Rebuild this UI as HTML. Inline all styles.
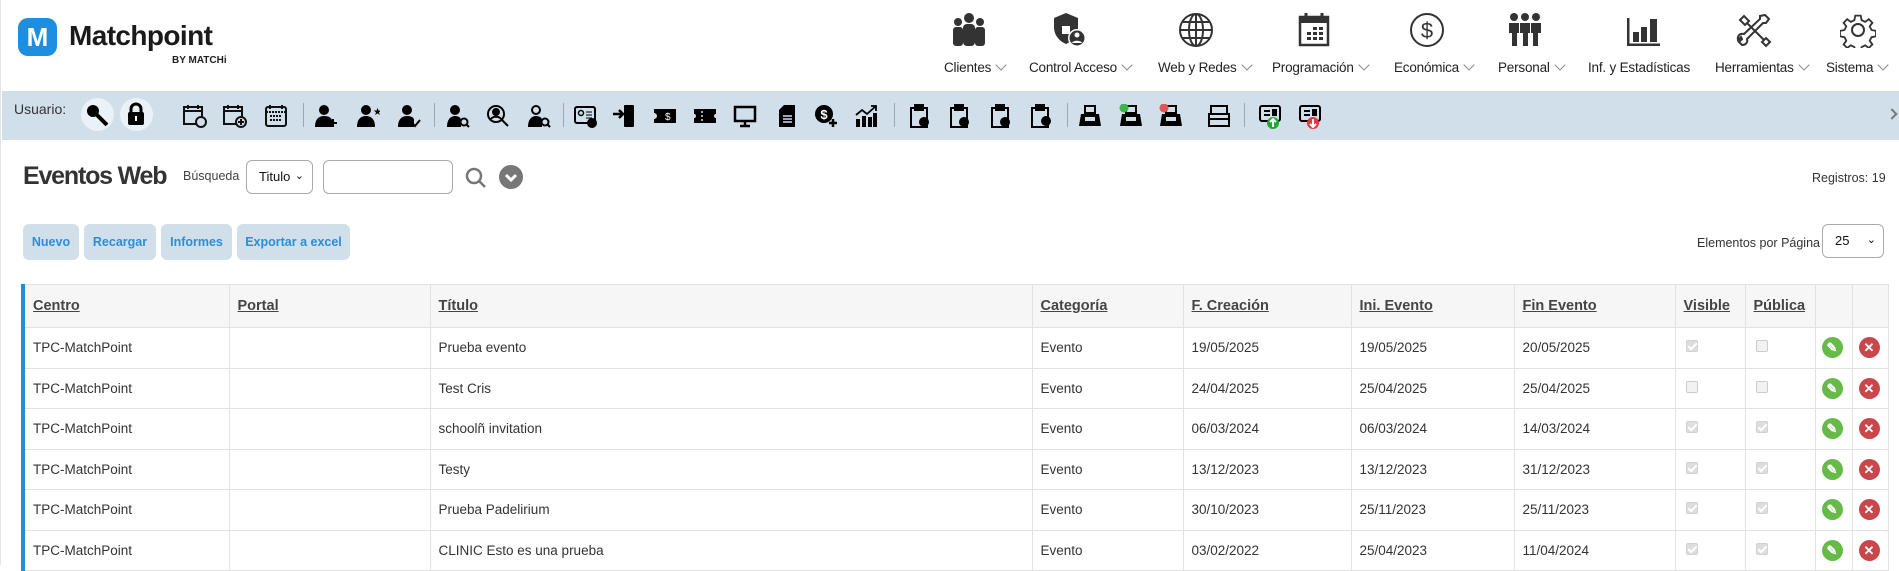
<!DOCTYPE html>
<html><head><meta charset="utf-8">
<style>
*{box-sizing:border-box;margin:0;padding:0}
body{width:1899px;height:565px;overflow:hidden;background:#fff;font-family:"Liberation Sans",sans-serif;color:#333;position:relative}
.a{position:absolute}
.nav{position:absolute;top:60px;font-size:13.5px;color:#222;white-space:nowrap;letter-spacing:-0.2px}
.nav .cv{display:inline-block;width:8px;height:8px;border-right:1.3px solid #888;border-bottom:1.3px solid #888;transform:rotate(45deg);margin-left:6px;position:relative;top:-3px}
.bar{position:absolute;left:2px;top:91px;width:1897px;height:49px;background:#d0dfe9}
.ti{position:absolute;top:104px}
.sep{position:absolute;top:103px;width:1px;height:24px;background:#9aa}
.btn{position:absolute;top:224px;height:36px;background:#d0dfe9;border-radius:6px;color:#2b8ed6;font-weight:bold;font-size:12.5px;line-height:36px;text-align:center}
table{position:absolute;left:21px;top:284px;border-collapse:collapse;font-size:13.5px;color:#333;border-left:4px solid #1e8fe0}
td,th{border:1px solid #e2e2e2;padding:0 0 0 8px;text-align:left;height:40.5px;white-space:nowrap}
th{background:#f6f6f6;height:43px;font-weight:bold;color:#444;font-size:14.5px;text-decoration:underline}
.cb{display:inline-block;width:12px;height:12px;border:1px solid #ccc;border-radius:2px;background:#f2f2f2;margin-left:2px}
.cb.k{background:#ddd;border-color:#d2d2d2;position:relative}
.cb.k:after{content:"";position:absolute;left:3px;top:0px;width:3px;height:7px;border-right:2px solid #fff;border-bottom:2px solid #fff;transform:rotate(45deg)}
.ed,.dl{display:inline-block;width:21px;height:21px;border-radius:50%;color:#fff;font-size:13px;text-align:center;line-height:21px;font-weight:bold}
.ed{background:#66bb48}.dl{background:#c9474a}
</style></head><body>
<div class="a" style="left:0;top:0;width:1px;height:565px;background:#e5e5e5"></div>
<!-- logo -->
<div class="a" style="left:18px;top:18px;width:39px;height:38px;border-radius:10px;background:#1e8fe0;color:#fff;font-weight:bold;font-size:26px;line-height:38px;text-align:center">M</div>
<div class="a" style="left:69px;top:20px;font-size:28px;font-weight:bold;color:#1a1a1a;letter-spacing:-0.6px">Matchpoint</div>
<div class="a" style="left:172px;top:55px;font-size:10px;font-weight:bold;color:#222">BY MATCHi</div>

<!-- nav icons -->
<svg class="a" style="left:950px;top:12px" width="38" height="36" viewBox="0 0 38 36" fill="#333"><circle cx="19" cy="6" r="5"/><circle cx="8" cy="10" r="4"/><circle cx="30" cy="10" r="4"/><rect x="13" y="12" width="12" height="22" rx="4"/><rect x="3" y="15" width="10" height="19" rx="3"/><rect x="25" y="15" width="10" height="19" rx="3"/></svg>
<svg class="a" style="left:1052px;top:11px" width="36" height="38" viewBox="0 0 36 38" fill="#333"><path d="M14 2l12 5v9c0 8-5 14-12 17C7 30 2 24 2 16V7z"/><circle cx="25" cy="27" r="9" fill="#fff"/><circle cx="25" cy="27" r="7.5"/><circle cx="25" cy="24" r="2.5" fill="#fff"/><path d="M20 32c1-3 9-3 10 0z" fill="#fff"/><rect x="10" y="15" width="8" height="8" fill="#fff"/></svg>
<svg class="a" style="left:1178px;top:12px" width="36" height="36" viewBox="0 0 36 36" fill="none" stroke="#333" stroke-width="2"><circle cx="18" cy="18" r="16"/><ellipse cx="18" cy="18" rx="7" ry="16"/><path d="M2 18h32M18 2v32M5 10h26M5 26h26"/></svg>
<svg class="a" style="left:1297px;top:11px" width="34" height="36" viewBox="0 0 34 36"><rect x="3" y="6" width="28" height="28" fill="none" stroke="#333" stroke-width="2.5"/><rect x="3" y="6" width="28" height="6" fill="#333"/><path d="M9 2v8M25 2v8" stroke="#333" stroke-width="3"/><g fill="#333"><rect x="16" y="16" width="4" height="3"/><rect x="22" y="16" width="4" height="3"/><rect x="10" y="21" width="4" height="3"/><rect x="16" y="21" width="4" height="3"/><rect x="22" y="21" width="4" height="3"/><rect x="10" y="26" width="4" height="3"/><rect x="16" y="26" width="4" height="3"/><rect x="22" y="26" width="4" height="3"/></g></svg>
<svg class="a" style="left:1409px;top:12px" width="36" height="36" viewBox="0 0 36 36"><circle cx="18" cy="18" r="16" fill="none" stroke="#333" stroke-width="2"/><text x="18" y="26" font-size="22" text-anchor="middle" fill="#333" font-family="Liberation Sans">$</text></svg>
<svg class="a" style="left:1508px;top:12px" width="34" height="36" viewBox="0 0 34 36" fill="#333"><circle cx="6" cy="5" r="4"/><circle cx="17" cy="5" r="4"/><circle cx="28" cy="5" r="4"/><path d="M1 11h10v10h-2v13H4V21H1zM12 11h10v10h-2v13h-5V21h-3zM23 11h10v10h-3v13h-5V21h-2z"/></svg>
<svg class="a" style="left:1625px;top:14px" width="36" height="34" viewBox="0 0 36 34" fill="#333"><rect x="2" y="4" width="2.5" height="28"/><rect x="2" y="29.5" width="33" height="2.5"/><rect x="8" y="18" width="6" height="10"/><rect x="16" y="13" width="6" height="15"/><rect x="25" y="5" width="7" height="23"/></svg>
<svg class="a" style="left:1736px;top:12px" width="36" height="36" viewBox="0 0 36 36" fill="none" stroke="#333" stroke-width="2"><path d="M4 8l4-4 5 5-2 2 17 17 2-2 4 4-4 4-4-4 2-2L11 11l-2 2z"/><path d="M29 3l4 4-3 4-3 0-16 16c1 3-1 6-5 6l-3-3 3-3-1-2-3 3c-1-4 2-7 6-6L24 7l0-3z"/></svg>
<svg class="a" style="left:1840px;top:12px" width="36" height="36" viewBox="0 0 36 36" fill="none" stroke="#333" stroke-width="2"><path d="M15 2h6l1 5 4 2 4-3 4 4-3 4 2 4 5 1v6l-5 1-2 4 3 4-4 4-4-3-4 2-1 5h-6l-1-5-4-2-4 3-4-4 3-4-2-4-5-1v-6l5-1 2-4-3-4 4-4 4 3 4-2z" transform="scale(0.9) translate(2 2)"/><circle cx="18" cy="18" r="6"/></svg>

<div class="nav" style="left:944px">Clientes<span class="cv"></span></div>
<div class="nav" style="left:1029px">Control Acceso<span class="cv"></span></div>
<div class="nav" style="left:1158px">Web y Redes<span class="cv"></span></div>
<div class="nav" style="left:1272px">Programación<span class="cv"></span></div>
<div class="nav" style="left:1394px">Económica<span class="cv"></span></div>
<div class="nav" style="left:1498px">Personal<span class="cv"></span></div>
<div class="nav" style="left:1588px">Inf. y Estadísticas</div>
<div class="nav" style="left:1715px">Herramientas<span class="cv"></span></div>
<div class="nav" style="left:1826px">Sistema<span class="cv"></span></div>

<!-- toolbar -->
<div class="bar"></div>
<div class="a" style="left:14px;top:101px;font-size:14px;color:#333">Usuario:</div>
<div class="a" style="left:81px;top:98px;width:33px;height:33px;border-radius:50%;background:#eaf2f7"></div>
<div class="a" style="left:120px;top:98px;width:33px;height:33px;border-radius:50%;background:#eaf2f7"></div>
<svg class="a" style="left:86px;top:104px" width="24" height="24" viewBox="0 0 24 24"><circle cx="7" cy="7" r="6" fill="#000"/><path d="M10 10l11 11" stroke="#000" stroke-width="4"/></svg>
<svg class="a" style="left:126px;top:102px" width="20" height="24" viewBox="0 0 20 24"><path d="M5 11V7a5 5 0 0110 0v4" stroke="#000" stroke-width="3" fill="none"/><rect x="2" y="10" width="16" height="13" rx="2"/><rect x="9" y="14" width="2" height="5" fill="#fff"/></svg>
<svg class="ti" style="left:183px" width="24" height="24" viewBox="0 0 24 24" fill="none" stroke="#111" stroke-width="2"><rect x="1" y="3" width="18" height="17"/><path d="M1 7h18M5 1v4M15 1v4"/><circle cx="18" cy="18" r="5" fill="#d0dfe9"/></svg>
<svg class="ti" style="left:223px" width="24" height="24" viewBox="0 0 24 24" fill="none" stroke="#111" stroke-width="2"><rect x="1" y="3" width="18" height="17"/><path d="M1 7h18M5 1v4M15 1v4"/><circle cx="18" cy="18" r="5" fill="#d0dfe9"/><path d="M18 15v6M15 18h6"/></svg>
<svg class="ti" style="left:264px" width="24" height="24" viewBox="0 0 24 24" fill="none" stroke="#111" stroke-width="2"><rect x="2" y="3" width="20" height="19" rx="2"/><path d="M2 8h20M6 1v4M18 1v4M6 12h12M6 16h12" stroke-dasharray="2 1"/></svg>
<div class="sep" style="left:303px"></div>
<svg class="ti" style="left:314px" width="24" height="24" viewBox="0 0 24 24" fill="#000"><circle cx="10" cy="6" r="5"/><path d="M1 23c0-8 4-11 9-11s8 2 8 5v6z"/><path d="M19 15v8M15 19h8" stroke="#000" stroke-width="2"/></svg>
<svg class="ti" style="left:356px" width="24" height="24" viewBox="0 0 24 24" fill="#000"><circle cx="10" cy="6" r="5"/><path d="M1 23c0-8 4-11 9-11s9 3 9 11z"/><text x="17" y="11" font-size="10">★</text></svg>
<svg class="ti" style="left:397px" width="24" height="24" viewBox="0 0 24 24" fill="#000"><circle cx="10" cy="6" r="5"/><path d="M1 23c0-8 4-11 9-11s7 2 7 4v7z"/><path d="M15 19l3 3 5-6" stroke="#000" stroke-width="2" fill="none"/></svg>
<div class="sep" style="left:434px"></div>
<svg class="ti" style="left:446px" width="24" height="24" viewBox="0 0 24 24" fill="#000"><circle cx="9" cy="6" r="5"/><path d="M1 23c0-8 4-11 8-11s6 2 6 4v7z"/><circle cx="18" cy="18" r="3.5" fill="none" stroke="#000" stroke-width="2"/><path d="M20 20l3 3" stroke="#000" stroke-width="2"/></svg>
<svg class="ti" style="left:486px" width="24" height="24" viewBox="0 0 24 24" fill="none" stroke="#000" stroke-width="2"><circle cx="10" cy="10" r="8"/><circle cx="10" cy="8" r="3" fill="#000"/><path d="M5 15c2-3 8-3 10 0M16 16l6 6" /></svg>
<svg class="ti" style="left:527px" width="24" height="24" viewBox="0 0 24 24" fill="#000"><circle cx="9" cy="6" r="4" fill="none" stroke="#000" stroke-width="2"/><path d="M1 23c0-8 4-11 8-11s6 2 6 4v7z"/><circle cx="18" cy="18" r="3.5" fill="none" stroke="#000" stroke-width="2"/><path d="M20 20l3 3" stroke="#000" stroke-width="2"/></svg>
<div class="sep" style="left:563px"></div>
<svg class="ti" style="left:574px" width="24" height="24" viewBox="0 0 24 24"><rect x="1" y="3" width="20" height="16" rx="2" fill="none" stroke="#000" stroke-width="2"/><circle cx="7" cy="9" r="2.5" fill="none" stroke="#000" stroke-width="1.5"/><path d="M12 8h6M12 11h6M12 14h6" stroke="#000"/><circle cx="18" cy="19" r="5"/></svg>
<svg class="ti" style="left:612px" width="24" height="24" viewBox="0 0 24 24" fill="#000"><rect x="12" y="1" width="10" height="22" rx="1"/><path d="M1 10h9M7 6l4 4-4 4" stroke="#000" stroke-width="2.5" fill="none"/></svg>
<svg class="ti" style="left:653px" width="24" height="24" viewBox="0 0 24 24"><path d="M1 5h22v14H1v-4a3 3 0 000-6z"/><text x="12" y="16" font-size="10" fill="#fff" font-family="Liberation Sans">$</text></svg>
<svg class="ti" style="left:693px" width="24" height="24" viewBox="0 0 24 24"><path d="M1 5h22v5a2 2 0 000 4v5H1v-5a2 2 0 000-4z"/><path d="M9 7v10" stroke="#d0dfe9" stroke-width="1.5" stroke-dasharray="2 2"/></svg>
<svg class="ti" style="left:733px" width="24" height="24" viewBox="0 0 24 24" fill="none" stroke="#000" stroke-width="2.5"><rect x="2" y="3" width="20" height="14"/><path d="M12 17v4M7 22h10"/></svg>
<svg class="ti" style="left:775px" width="24" height="24" viewBox="0 0 24 24"><path d="M9 1h11v22H4V6z"/><path d="M8 12h9M8 15h9M8 18h9" stroke="#d0dfe9" stroke-width="1.5"/></svg>
<svg class="ti" style="left:814px" width="24" height="24" viewBox="0 0 24 24"><circle cx="10" cy="10" r="9"/><text x="10" y="15" font-size="13" fill="#fff" text-anchor="middle" font-family="Liberation Sans" font-weight="bold">$</text><path d="M19 15v8M15 19h8" stroke="#000" stroke-width="2.5"/></svg>
<svg class="ti" style="left:854px" width="24" height="24" viewBox="0 0 24 24" fill="#000"><rect x="2" y="15" width="4" height="8"/><rect x="8" y="12" width="4" height="11"/><rect x="14" y="13" width="4" height="10"/><rect x="19" y="9" width="4" height="14"/><path d="M2 11l6-5 5 4 9-8M17 2h5v5" stroke="#000" stroke-width="1.8" fill="none"/></svg>
<div class="sep" style="left:894px"></div>
<svg class="ti" style="left:909px" width="24" height="24" viewBox="0 0 24 24" fill="none" stroke="#000" stroke-width="2"><rect x="2" y="4" width="16" height="19"/><rect x="6" y="1" width="8" height="5" fill="#000"/><circle cx="15" cy="18" r="4" fill="#000"/></svg>
<svg class="ti" style="left:949px" width="24" height="24" viewBox="0 0 24 24" fill="none" stroke="#000" stroke-width="2"><rect x="2" y="4" width="16" height="19"/><rect x="6" y="1" width="8" height="5" fill="#000"/><circle cx="15" cy="18" r="4" fill="#000"/></svg>
<svg class="ti" style="left:990px" width="24" height="24" viewBox="0 0 24 24" fill="none" stroke="#000" stroke-width="2"><rect x="2" y="4" width="16" height="19"/><rect x="6" y="1" width="8" height="5" fill="#000"/><circle cx="15" cy="18" r="4" fill="#000"/></svg>
<svg class="ti" style="left:1030px" width="24" height="24" viewBox="0 0 24 24" fill="none" stroke="#000" stroke-width="2"><rect x="2" y="4" width="16" height="19"/><rect x="6" y="1" width="8" height="5" fill="#000"/><circle cx="16" cy="17" r="4" fill="#000"/></svg>
<div class="sep" style="left:1067px"></div>
<svg class="ti" style="left:1078px" width="24" height="24" viewBox="0 0 24 24"><rect x="7" y="2" width="10" height="7" fill="none" stroke="#000" stroke-width="2"/><path d="M3 10h18l2 12H1z"/><rect x="7" y="13" width="10" height="4" fill="#d0dfe9"/></svg>
<svg class="ti" style="left:1119px" width="24" height="24" viewBox="0 0 24 24"><rect x="7" y="2" width="10" height="7" fill="none" stroke="#000" stroke-width="2"/><path d="M3 10h18l2 12H1z"/><rect x="7" y="13" width="10" height="4" fill="#d0dfe9"/><circle cx="5" cy="4" r="4.5" fill="#3bb54a"/></svg>
<svg class="ti" style="left:1159px" width="24" height="24" viewBox="0 0 24 24"><rect x="7" y="2" width="10" height="7" fill="none" stroke="#000" stroke-width="2"/><path d="M3 10h18l2 12H1z"/><rect x="7" y="13" width="10" height="4" fill="#d0dfe9"/><circle cx="5" cy="4" r="4.5" fill="#e05555"/></svg>
<svg class="ti" style="left:1207px" width="24" height="24" viewBox="0 0 24 24" fill="none" stroke="#000" stroke-width="2"><rect x="4" y="2" width="16" height="8"/><path d="M2 10h20v12H2zM2 15h20"/></svg>
<div class="sep" style="left:1244px"></div>
<svg class="ti" style="left:1259px" width="26" height="26" viewBox="0 0 26 26"><rect x="1" y="2" width="20" height="15" rx="2" fill="none" stroke="#000" stroke-width="2"/><path d="M5 7h6M5 11h6" stroke="#000" stroke-width="2"/><rect x="13" y="5" width="5" height="7"/><circle cx="14" cy="19" r="6" fill="#22a832"/><path d="M14 15v8M11 18l3-3 3 3" stroke="#fff" stroke-width="2" fill="none"/></svg>
<svg class="ti" style="left:1299px" width="26" height="26" viewBox="0 0 26 26"><rect x="1" y="2" width="20" height="15" rx="2" fill="none" stroke="#000" stroke-width="2"/><path d="M5 7h6M5 11h6" stroke="#000" stroke-width="2"/><rect x="13" y="5" width="5" height="7"/><circle cx="14" cy="19" r="6" fill="#e03b3b"/><path d="M14 15v8M11 20l3 3 3-3" stroke="#fff" stroke-width="2" fill="none"/></svg>
<div class="a" style="left:1888px;top:110px;width:8px;height:8px;border-right:2px solid #777;border-top:2px solid #777;transform:rotate(45deg)"></div>

<!-- title row -->
<div class="a" style="left:23px;top:162px;font-size:25px;font-weight:bold;color:#333;letter-spacing:-1.2px">Eventos Web</div>
<div class="a" style="left:183px;top:169px;font-size:12.5px;color:#444">Búsqueda</div>
<div class="a" style="left:246px;top:160px;width:67px;height:34px;border:1px solid #aaa;border-radius:6px;font-size:13px;line-height:32px;padding-left:12px;color:#111">Titulo<span style="position:absolute;right:8px;top:-1px;font-size:11px">&#x2304;</span></div>
<div class="a" style="left:323px;top:160px;width:130px;height:34px;border:1px solid #aaa;border-radius:6px"></div>
<svg class="a" style="left:464px;top:166px" width="24" height="24" viewBox="0 0 24 24" fill="none" stroke="#777" stroke-width="2.5"><circle cx="10" cy="10" r="7"/><path d="M15 15l6 6"/></svg>
<svg class="a" style="left:499px;top:165px" width="24" height="24" viewBox="0 0 24 24"><circle cx="12" cy="12" r="12" fill="#777"/><path d="M7 10l5 5 5-5" stroke="#fff" stroke-width="3" fill="none"/></svg>
<div class="a" style="left:1812px;top:171px;font-size:12.5px;color:#333">Registros: 19</div>

<div class="btn" style="left:23px;width:56px">Nuevo</div>
<div class="btn" style="left:84px;width:72px">Recargar</div>
<div class="btn" style="left:161px;width:71px">Informes</div>
<div class="btn" style="left:237px;width:113px">Exportar a excel</div>
<div class="a" style="left:1697px;top:236px;font-size:12.5px;color:#333">Elementos por Página</div>
<div class="a" style="left:1822px;top:224px;width:62px;height:34px;border:1px solid #aaa;border-radius:6px;font-size:13px;line-height:32px;padding-left:12px;color:#111">25<span style="position:absolute;right:7px;top:-1px;font-size:11px">&#x2304;</span></div>

<table>
<colgroup><col style="width:206px"><col style="width:201px"><col style="width:602px"><col style="width:151px"><col style="width:168px"><col style="width:163px"><col style="width:161px"><col style="width:70px"><col style="width:70px"><col style="width:37px"><col style="width:36px"></colgroup>
<tr><th>Centro</th><th>Portal</th><th>Título</th><th>Categoría</th><th>F. Creación</th><th>Ini. Evento</th><th>Fin Evento</th><th>Visible</th><th>Pública</th><th style="text-decoration:none"></th><th style="text-decoration:none"></th></tr>
<tr><td>TPC-MatchPoint</td><td></td><td>Prueba evento</td><td>Evento</td><td>19/05/2025</td><td>19/05/2025</td><td>20/05/2025</td><td><span class="cb k"></span></td><td><span class="cb"></span></td><td style="padding-left:6px"><span class="ed">✎</span></td><td style="padding-left:6px"><span class="dl">✕</span></td></tr>
<tr><td>TPC-MatchPoint</td><td></td><td>Test Cris</td><td>Evento</td><td>24/04/2025</td><td>25/04/2025</td><td>25/04/2025</td><td><span class="cb"></span></td><td><span class="cb"></span></td><td style="padding-left:6px"><span class="ed">✎</span></td><td style="padding-left:6px"><span class="dl">✕</span></td></tr>
<tr><td>TPC-MatchPoint</td><td></td><td>schoolñ invitation</td><td>Evento</td><td>06/03/2024</td><td>06/03/2024</td><td>14/03/2024</td><td><span class="cb k"></span></td><td><span class="cb k"></span></td><td style="padding-left:6px"><span class="ed">✎</span></td><td style="padding-left:6px"><span class="dl">✕</span></td></tr>
<tr><td>TPC-MatchPoint</td><td></td><td>Testy</td><td>Evento</td><td>13/12/2023</td><td>13/12/2023</td><td>31/12/2023</td><td><span class="cb k"></span></td><td><span class="cb k"></span></td><td style="padding-left:6px"><span class="ed">✎</span></td><td style="padding-left:6px"><span class="dl">✕</span></td></tr>
<tr><td>TPC-MatchPoint</td><td></td><td>Prueba Padelirium</td><td>Evento</td><td>30/10/2023</td><td>25/11/2023</td><td>25/11/2023</td><td><span class="cb k"></span></td><td><span class="cb k"></span></td><td style="padding-left:6px"><span class="ed">✎</span></td><td style="padding-left:6px"><span class="dl">✕</span></td></tr>
<tr><td>TPC-MatchPoint</td><td></td><td>CLINIC Esto es una prueba</td><td>Evento</td><td>03/02/2022</td><td>25/04/2023</td><td>11/04/2024</td><td><span class="cb k"></span></td><td><span class="cb k"></span></td><td style="padding-left:6px"><span class="ed">✎</span></td><td style="padding-left:6px"><span class="dl">✕</span></td></tr>
</table>
</body></html>
